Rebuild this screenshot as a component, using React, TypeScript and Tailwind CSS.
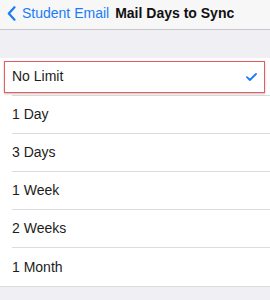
import React from "react";

const OPTIONS = ["No Limit", "1 Day", "3 Days", "1 Week", "2 Weeks", "1 Month"];

const App: React.FC = () => {
  const selected = "No Limit";

  return (
    <div
      className="w-[270px] h-[300px] overflow-hidden bg-[#efeff4]"
      style={{ fontFamily: '"Liberation Sans", Arial, sans-serif' }}
    >
      {/* Nav bar */}
      <div className="flex items-center h-[30px] pb-[3px] bg-[#f7f7f8] border-b border-[#c8c7cc]">
        <div className="flex items-center pl-[7px] text-[14px] text-[#1a7cf6]">
          <svg width="9" height="15" viewBox="0 0 9 15" className="mr-[6px]">
            <path d="M7.5 1.2 L1.8 7.5 L7.5 13.8" fill="none" stroke="#1a7cf6" strokeWidth="2.2" strokeLinecap="round" strokeLinejoin="round" />
          </svg>
          Student Email
        </div>
        <div className="ml-[6px] text-[14px] font-bold text-[#111]">Mail Days to Sync</div>
      </div>

      <div className="h-[28px]" />

      {/* Options list */}
      <div className="bg-white border-b border-[#dcdce0]">
        {OPTIONS.map((opt, i) => (
          <div key={opt} className="relative pl-[12px]">
            <div
              className={`flex items-center h-[38px] pr-[13px] text-[14px] text-[#1c1c1c] ${
                i < OPTIONS.length - 1 ? "border-b border-[#dcdce0]" : ""
              }`}
            >
              <span>{opt}</span>
              {opt === selected && (
                <svg width="11" height="8" viewBox="0 0 11 8" className="ml-auto">
                  <path d="M1 4.2 L3.9 7 L10 1" fill="none" stroke="#1a7cf6" strokeWidth="1.8" strokeLinecap="round" strokeLinejoin="round" />
                </svg>
              )}
            </div>
            {opt === selected && (
              <div className="absolute left-[4px] right-[5px] top-[3px] bottom-[3px] border-[1.5px] border-[#ec5b5b] shadow-[0_1px_2px_rgba(0,0,0,0.25)] pointer-events-none" />
            )}
          </div>
        ))}
      </div>
    </div>
  );
};

export default App;
